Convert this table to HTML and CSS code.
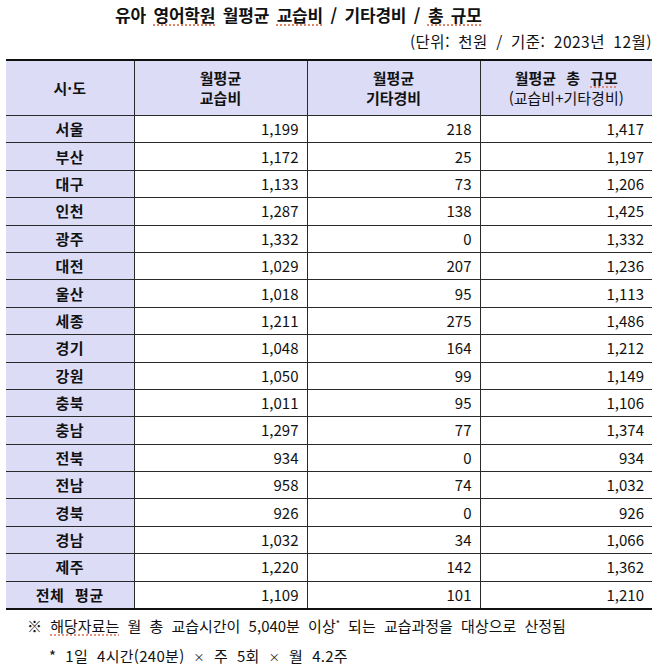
FILE: index.html
```html
<!DOCTYPE html>
<html lang="ko">
<head>
<meta charset="utf-8">
<link rel="stylesheet" href="styles.css">
</head>
<body>
<div class="page">
  <h1 class="title">유아 <span class="sq">영어학원</span> 월평균 <span class="sq">교습비</span> / 기타경비 / <span class="sq">총 규모</span></h1>
  <p class="unit">(단위: 천원 / 기준: 2023년 12월)</p>
  <table class="tbl">
    <colgroup>
      <col class="c1"><col class="c2"><col class="c3"><col class="c4">
    </colgroup>
    <thead>
      <tr>
        <th>시·도</th>
        <th>월평균<br>교습비</th>
        <th>월평균<br>기타경비</th>
        <th>월평균 총 <span class="sq">규모</span><br><span class="sub">(교습비+기타경비)</span></th>
      </tr>
    </thead>
    <tbody>
      <tr><th>서울</th><td>1,199</td><td>218</td><td>1,417</td></tr>
      <tr><th>부산</th><td>1,172</td><td>25</td><td>1,197</td></tr>
      <tr><th>대구</th><td>1,133</td><td>73</td><td>1,206</td></tr>
      <tr><th>인천</th><td>1,287</td><td>138</td><td>1,425</td></tr>
      <tr><th>광주</th><td>1,332</td><td>0</td><td>1,332</td></tr>
      <tr><th>대전</th><td>1,029</td><td>207</td><td>1,236</td></tr>
      <tr><th>울산</th><td>1,018</td><td>95</td><td>1,113</td></tr>
      <tr><th>세종</th><td>1,211</td><td>275</td><td>1,486</td></tr>
      <tr><th>경기</th><td>1,048</td><td>164</td><td>1,212</td></tr>
      <tr><th>강원</th><td>1,050</td><td>99</td><td>1,149</td></tr>
      <tr><th>충북</th><td>1,011</td><td>95</td><td>1,106</td></tr>
      <tr><th>충남</th><td>1,297</td><td>77</td><td>1,374</td></tr>
      <tr><th>전북</th><td>934</td><td>0</td><td>934</td></tr>
      <tr><th>전남</th><td>958</td><td>74</td><td>1,032</td></tr>
      <tr><th>경북</th><td>926</td><td>0</td><td>926</td></tr>
      <tr><th>경남</th><td>1,032</td><td>34</td><td>1,066</td></tr>
      <tr><th>제주</th><td>1,220</td><td>142</td><td>1,362</td></tr>
      <tr class="total"><th>전체 평균</th><td>1,109</td><td>101</td><td>1,210</td></tr>
    </tbody>
  </table>
  <p class="note">※ <span class="sq">해당자료는</span> 월 총 교습시간이 5,040분 이상<sup>*</sup> 되는 교습과정을 대상으로 산정됨</p>
  <p class="note2">* 1일 4시간(240분) <span class="x">×</span> 주 5회 <span class="x">×</span> 월 4.2주</p>
</div>
</body>
</html>
```

FILE: styles.css
```css
html, body {
  margin: 0;
  padding: 0;
  background: #ffffff;
}
body {
  font-family: "Noto Sans CJK KR", "Noto Sans", sans-serif;
  color: #111;
}
.page {
  width: 658px;
  padding: 0 6px 0 6px;
  box-sizing: border-box;
}
.title {
  margin: 0;
  padding: 4px 0 0 109px;
  height: 22px;
  font-size: 17px;
  font-weight: 700;
  line-height: 22px;
  letter-spacing: -0.2px;
  word-spacing: 3px;
  white-space: nowrap;
}
.sq {
  text-decoration: underline dotted #e07050;
  text-underline-offset: 3px;
}
.unit {
  margin: 0;
  height: 33px;
  box-sizing: border-box;
  padding-top: 5px;
  text-align: right;
  font-size: 15.5px;
  line-height: 20px;
  letter-spacing: 0.5px;
  word-spacing: 3.5px;
  white-space: nowrap;
}
.tbl {
  width: 646px;
  border-collapse: collapse;
  table-layout: fixed;
  border-top: 2px solid #111;
  border-bottom: 2px solid #111;
}
.c1 { width: 128px; }
.c2 { width: 173px; }
.c3 { width: 173px; }
.c4 { width: 172px; }
.tbl th, .tbl td {
  border: 1px solid #2a2a2a;
  padding: 0;
  font-size: 15px;
  line-height: 20px;
  height: 26.4px;
}
.tbl tr > :first-child { border-left: none; }
.tbl tr > :last-child { border-right: none; }
.tbl thead th {
  background: #dcdcf6;
  font-weight: 700;
  height: 54px;
  line-height: 20px;
  text-align: center;
  word-spacing: 6px;
}
.tbl thead .sub {
  font-weight: 400;
  font-size: 15px;
  letter-spacing: 0;
  word-spacing: 0;
}
.tbl tbody th {
  background: #dcdcf6;
  font-weight: 700;
  text-align: center;
  letter-spacing: 0.5px;
}
.tbl tbody .total th { word-spacing: 6px; }
.tbl td {
  text-align: right;
  padding-right: 8px;
  font-weight: 400;
}
.note {
  margin: 0;
  padding: 5px 0 0 21px;
  font-size: 15px;
  line-height: 22px;
  word-spacing: 4px;
  white-space: nowrap;
}
.note sup {
  font-size: 9px;
  vertical-align: 5px;
  line-height: 0;
}
.note2 {
  margin: 8px 0 0 43px;
  font-size: 15px;
  line-height: 22px;
  word-spacing: 4.5px;
  letter-spacing: 0.3px;
  white-space: nowrap;
}
.note2 .x {
  font-size: 11px;
}
```
